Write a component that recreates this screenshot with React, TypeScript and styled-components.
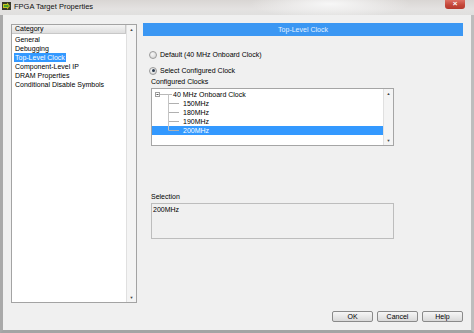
import React from 'react'
import styled, { createGlobalStyle } from 'styled-components'

const GlobalStyle = createGlobalStyle`
  html, body {
    margin: 0;
    padding: 0;
    background: #f0f0f0;
  }
  body {
    font-family: 'Liberation Sans', Arial, sans-serif;
    font-size: 7px;
    color: #000;
  }
`

const Window = styled.div`
  width: 474px;
  height: 333px;
  display: flex;
  flex-direction: column;
  overflow: hidden;
`

const TitleBar = styled.div`
  height: 15px;
  flex: none;
  display: flex;
  align-items: flex-start;
  padding: 2px 0 0 2px;
  box-sizing: border-box;
  background: radial-gradient(ellipse 80px 14px at 330px 4px, #f7f7f7 0%, rgba(247, 247, 247, 0) 100%),
    linear-gradient(to bottom, #d9d6d4 0%, #e4e2e1 60%, #e0dfde 100%);
  position: relative;
  > span {
    margin-left: 3px;
    font-size: 7.5px;
    line-height: 9px;
    color: #111;
  }
`

const CloseButton = styled.div`
  position: absolute;
  top: 0;
  right: 9px;
  width: 20px;
  height: 9px;
  border-radius: 0 0 3px 3px;
  background: linear-gradient(to bottom, #dd6f63 0%, #c4473a 55%, #b5392d 100%);
  color: #fff;
  font-size: 8px;
  line-height: 8px;
  text-align: center;
  font-weight: bold;
`

const Frame = styled.div`
  flex: 1;
  display: flex;
  flex-direction: column;
  border-left: 3px solid #a9a9a9;
  border-right: 3px solid #bdbdbd;
  border-bottom: 3px solid #a4a4a4;
  background: #f0f0f0;
`

const Main = styled.div`
  display: flex;
  flex-direction: row;
  align-items: flex-start;
  padding-top: 8px;
`

const ListBox = styled.div`
  margin: 1px 0 0 8px;
  width: 126px;
  height: 279px;
  box-sizing: border-box;
  border: 1px solid #a3a3a3;
  background: #fff;
  display: flex;
  flex-direction: row;
`

const ListContent = styled.div`
  flex: 1;
  display: flex;
  flex-direction: column;
  align-items: flex-start;
`

const ListHeader = styled.div`
  align-self: stretch;
  height: 8px;
  line-height: 8px;
  padding-left: 3px;
  background: linear-gradient(to bottom, #f4f4f4, #dedede);
  border-bottom: 1px solid #c8c8c8;
  border-right: 1px solid #c8c8c8;
  margin-bottom: 1px;
`

const ListItem = styled.div<{ $selected?: boolean }>`
  height: 9px;
  line-height: 9px;
  padding: 0 1px;
  margin-left: 2px;
  background: ${(p) => (p.$selected ? '#3399ff' : 'transparent')};
  color: ${(p) => (p.$selected ? '#fff' : '#000')};
`

const ScrollBar = styled.div`
  width: 9px;
  flex: none;
  display: flex;
  flex-direction: column;
  justify-content: space-between;
  align-items: center;
  background: #f4f4f4;
  border-left: 1px solid #e0e0e0;
  color: #444;
  font-size: 4px;
  line-height: 7px;
  padding: 1px 0;
`

const RightColumn = styled.div`
  margin-left: 6px;
  width: 320px;
  display: flex;
  flex-direction: column;
`

const HeaderBar = styled.div`
  height: 13px;
  line-height: 13px;
  background: #3b97f3;
  color: #e4f0ff;
  text-align: center;
  font-size: 7px;
`

const RadioRow = styled.label<{ $gap: number }>`
  margin-top: ${(p) => p.$gap}px;
  margin-left: 6px;
  height: 9px;
  display: flex;
  align-items: center;
  gap: 3px;
`

const Radio = styled.span<{ $checked?: boolean }>`
  width: 6px;
  height: 6px;
  border-radius: 50%;
  border: 1px solid #9a9a9a;
  background: radial-gradient(circle at 40% 35%, #f8f8f8, #cfcfcf);
  position: relative;
  &::after {
    content: '';
    display: ${(p) => (p.$checked ? 'block' : 'none')};
    position: absolute;
    left: 1.5px;
    top: 1.5px;
    width: 3px;
    height: 3px;
    border-radius: 50%;
    background: #2c3b4d;
  }
`

const FieldLabel = styled.div<{ $gap: number }>`
  margin-top: ${(p) => p.$gap}px;
  margin-left: 8px;
  height: 9px;
  line-height: 9px;
`

const TreeBox = styled.div`
  margin: 2px 0 0 8px;
  width: 243px;
  height: 58px;
  box-sizing: border-box;
  border: 1px solid #a5a5a5;
  background: #fff;
  display: flex;
  flex-direction: row;
`

const TreeRows = styled.div`
  flex: 1;
  padding-top: 1px;
  display: flex;
  flex-direction: column;
`

const TreeRow = styled.div<{ $selected?: boolean }>`
  height: 9px;
  line-height: 9px;
  display: flex;
  align-items: center;
  background: ${(p) => (p.$selected ? '#3399ff' : 'transparent')};
  color: ${(p) => (p.$selected ? '#fff' : '#000')};
  > svg {
    flex: none;
  }
`

const SelectionBox = styled.div`
  margin: 2px 0 0 8px;
  width: 243px;
  height: 36px;
  box-sizing: border-box;
  border: 1px solid #bdbdbd;
  padding: 1px 1px;
  line-height: 9px;
`

const Footer = styled.div`
  display: flex;
  flex-direction: row;
  justify-content: flex-end;
  gap: 4px;
  padding: 8px 8px 8px 0;
`

const Button = styled.div`
  width: 41px;
  height: 11px;
  box-sizing: border-box;
  border: 1px solid #8a8a8a;
  border-radius: 2px;
  background: linear-gradient(to bottom, #f6f6f6 0%, #e8e8e8 50%, #d9d9d9 100%);
  text-align: center;
  line-height: 9px;
`

const AppIcon = () => (
  <svg width='9' height='8' viewBox='0 0 9 8'>
    <rect x='0' y='0' width='9' height='8' fill='#3a3a2a' />
    <path d='M1 2 L5 2 L5 0.5 L8 4 L5 7.5 L5 6 L1 6 Z' fill='#c8c820' />
    <path d='M2 3 L5.5 3 L5.5 2.5 L7 4 L5.5 5.5 L5.5 5 L2 5 Z' fill='#4aa02a' />
  </svg>
)

const RootGuide = () => (
  <svg width='21' height='9' viewBox='0 0 21 9'>
    <rect x='3.5' y='2.5' width='4' height='4' fill='#fff' stroke='#a0a0a0' />
    <line x1='4.5' y1='4.5' x2='6.5' y2='4.5' stroke='#555' />
    <line x1='8' y1='4.5' x2='20' y2='4.5' stroke='#b8b8b8' />
    <line x1='16.5' y1='4.5' x2='16.5' y2='9' stroke='#c4c4c4' />
  </svg>
)

const ChildGuide = ({ last }: { last?: boolean }) => (
  <svg width='31' height='9' viewBox='0 0 31 9'>
    <line x1='16.5' y1='0' x2='16.5' y2={last ? 4.5 : 9} stroke='#c4c4c4' />
    <line x1='17' y1='4.5' x2='27' y2='4.5' stroke='#b0b0b0' />
  </svg>
)

const categories = [
  'General',
  'Debugging',
  'Top-Level Clock',
  'Component-Level IP',
  'DRAM Properties',
  'Conditional Disable Symbols',
]

const clocks = ['150MHz', '180MHz', '190MHz', '200MHz']

export default function App() {
  return (
    <>
      <GlobalStyle />
      <Window>
        <TitleBar>
          <AppIcon />
          <span>FPGA Target Properties</span>
          <CloseButton>×</CloseButton>
        </TitleBar>
        <Frame>
          <Main>
            <ListBox>
              <ListContent>
                <ListHeader>Category</ListHeader>
                {categories.map((c) => (
                  <ListItem key={c} $selected={c === 'Top-Level Clock'}>
                    {c}
                  </ListItem>
                ))}
              </ListContent>
              <ScrollBar>
                <span>▲</span>
                <span>▼</span>
              </ScrollBar>
            </ListBox>
            <RightColumn>
              <HeaderBar>Top-Level Clock</HeaderBar>
              <RadioRow $gap={14}>
                <Radio />
                <span>Default (40 MHz Onboard Clock)</span>
              </RadioRow>
              <RadioRow $gap={7}>
                <Radio $checked />
                <span>Select Configured Clock</span>
              </RadioRow>
              <FieldLabel $gap={2}>Configured Clocks</FieldLabel>
              <TreeBox>
                <TreeRows>
                  <TreeRow>
                    <RootGuide />
                    <span>40 MHz Onboard Clock</span>
                  </TreeRow>
                  {clocks.map((c, i) => (
                    <TreeRow key={c} $selected={c === '200MHz'}>
                      <ChildGuide last={i === clocks.length - 1} />
                      <span>{c}</span>
                    </TreeRow>
                  ))}
                </TreeRows>
                <ScrollBar>
                  <span>▲</span>
                  <span>▼</span>
                </ScrollBar>
              </TreeBox>
              <FieldLabel $gap={46}>Selection</FieldLabel>
              <SelectionBox>200MHz</SelectionBox>
            </RightColumn>
          </Main>
          <Footer>
            <Button>OK</Button>
            <Button>Cancel</Button>
            <Button>Help</Button>
          </Footer>
        </Frame>
      </Window>
    </>
  )
}
